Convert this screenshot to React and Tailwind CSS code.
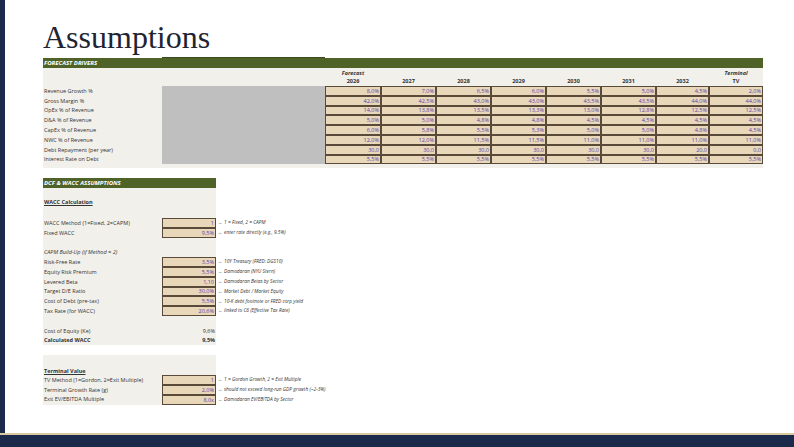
export default function App() {
  const years = ["2026","2027","2028","2029","2030","2031","2032","TV"];
  const widths = ["w-[56px]","w-[55px]","w-[55px]","w-[55px]","w-[55px]","w-[55px]","w-[53px]","w-[54px]"];
  const rows = [
    ["Revenue Growth %", ["8,0%","7,0%","6,5%","6,0%","5,5%","5,0%","4,5%","2,0%"]],
    ["Gross Margin %", ["42,0%","42,5%","43,0%","43,0%","43,5%","43,5%","44,0%","44,0%"]],
    ["OpEx % of Revenue", ["14,0%","13,8%","13,5%","13,3%","13,0%","12,8%","12,5%","12,5%"]],
    ["D&A % of Revenue", ["5,0%","5,0%","4,8%","4,8%","4,5%","4,5%","4,5%","4,5%"]],
    ["CapEx % of Revenue", ["6,0%","5,8%","5,5%","5,3%","5,0%","5,0%","4,8%","4,5%"]],
    ["NWC % of Revenue", ["12,0%","12,0%","11,5%","11,5%","11,0%","11,0%","11,0%","11,0%"]],
    ["Debt Repayment (per year)", ["30,0","30,0","30,0","30,0","30,0","30,0","20,0","0,0"]],
    ["Interest Rate on Debt", ["5,5%","5,5%","5,5%","5,5%","5,5%","5,5%","5,5%","5,5%"]],
  ];
  const font = { fontFamily: '"Open Sans", "Liberation Sans", sans-serif' };
  const Row = ({ label, val, note, bold, italic, input = true }) => (
    <div className="flex h-[9.8px] items-center whitespace-nowrap">
      <div className={`w-[119px] shrink-0 h-full flex items-center pl-[1px] bg-[#f2f0ea] ${bold ? "font-bold" : ""} ${italic ? "italic" : ""}`}>{label}</div>
      {val !== undefined ? (
        <div className={`w-[54px] shrink-0 h-full flex items-center justify-end pr-[1px] ${input ? "bg-[#e8d7b8] border border-[#5a4a3a] text-[#5b3fb0]" : "bg-[#f2f0ea] text-[#333]"} ${bold ? "font-bold" : ""}`}>{val}</div>
      ) : <div className="w-[54px] shrink-0 h-full bg-[#f2f0ea]" />}
      {note && <div className="pl-[2px] italic text-[4.8px] text-[#333] shrink-0">{note}</div>}
    </div>
  );
  return (
    <div className="w-[794px] h-[447px] bg-white relative overflow-hidden text-[5.5px] text-[#333]" style={font}>
      <div className="absolute left-0 top-0 w-[5px] h-full bg-[#1b2a4a]" />
      <div className="absolute left-0 bottom-0 w-full h-[14px] bg-[#1b2a4a] border-t-[2px] border-[#d9c9a3]" />
      <div className="pl-[43px] pt-[18px]">
        <div className="text-[32px] leading-[38px] text-[#1f2433]" style={{ fontFamily: '"Liberation Serif", serif' }}>Assumptions</div>
        <div className="w-[720px] mt-[2px]">
          <div className="relative h-[10px] bg-[#4f6228] text-white font-bold italic text-[6px] flex items-center pl-[1px]">
            <div className="absolute left-[119px] -top-[1px] w-[163px] h-[1px] bg-[#3b4a1e]" />
            FORECAST DRIVERS
          </div>
          <div className="bg-[#f2f0ea] pb-[4px]">
            <div className="flex h-[9px] items-end font-bold italic">
              <div className="w-[282px]" />
              <div className="w-[56px] text-center">Forecast</div>
              <div className="w-[328px]" />
              <div className="w-[54px] text-center">Terminal</div>
            </div>
            <div className="flex h-[9px] items-center font-bold">
              <div className="w-[282px]" />
              {years.map((y, i) => <div key={y} className={`${widths[i]} text-center`}>{y}</div>)}
            </div>
            {rows.map(([l, v]) => (
              <div key={l} className="flex h-[9.8px] items-center">
                <div className="w-[119px] pl-[1px]">{l}</div>
                <div className="w-[163px] h-full bg-[#bfbfbf]" />
                {v.map((x, i) => (
                  <div key={i} className={`${widths[i]} h-full flex items-center justify-end pr-[1px] bg-[#e8d7b8] border-[0.5px] border-[#5a4a3a] text-[#5b3fb0]`}>{x}</div>
                ))}
              </div>
            ))}
          </div>
        </div>
        <div className="w-[173px] mt-[10px]">
          <div className="h-[10px] bg-[#4f6228] text-white font-bold italic text-[6px] flex items-center pl-[1px]">DCF &amp; WACC ASSUMPTIONS</div>
          <div className="bg-[#f2f0ea] pt-[10px]">
            <div className="h-[9.8px] font-bold underline pl-[1px]">WACC Calculation</div>
            <div className="h-[9.8px]" />
          </div>
          <Row label="WACC Method (1=Fixed, 2=CAPM)" val="1" note="← 1 = Fixed, 2 = CAPM" />
          <Row label="Fixed WACC" val="9,5%" note="← enter rate directly (e.g., 9.5%)" />
          <div className="h-[9.8px] bg-[#f2f0ea]" />
          <div className="h-[9.8px] bg-[#f2f0ea] italic pl-[1px] flex items-center">CAPM Build-Up (if Method = 2)</div>
          <Row label="Risk-Free Rate" val="3,5%" note="← 10Y Treasury (FRED: DGS10)" />
          <Row label="Equity Risk Premium" val="5,5%" note="← Damodaran (NYU Stern)" />
          <Row label="Levered Beta" val="1,10" note="← Damodaran Betas by Sector" />
          <Row label="Target D/E Ratio" val="30,0%" note="← Market Debt / Market Equity" />
          <Row label="Cost of Debt (pre-tax)" val="5,5%" note="← 10-K debt footnote or FRED corp yield" />
          <Row label="Tax Rate (for WACC)" val="20,6%" note="← linked to C6 (Effective Tax Rate)" />
          <div className="h-[9.8px] bg-[#f2f0ea]" />
          <Row label="Cost of Equity (Ke)" val="9,6%" input={false} />
          <Row label="Calculated WACC" val="9,5%" input={false} bold />
          <div className="h-[10px]" />
          <div className="bg-[#f2f0ea] pt-[10px]">
            <div className="h-[9.8px] font-bold underline pl-[1px] flex items-end">Terminal Value</div>
          </div>
          <Row label="TV Method (1=Gordon, 2=Exit Multiple)" val="1" note="← 1 = Gordon Growth, 2 = Exit Multiple" />
          <Row label="Terminal Growth Rate (g)" val="2,0%" note="← should not exceed long-run GDP growth (~2-3%)" />
          <Row label="Exit EV/EBITDA Multiple" val="8,0x" note="← Damodaran EV/EBITDA by Sector" />
        </div>
      </div>
    </div>
  );
}
